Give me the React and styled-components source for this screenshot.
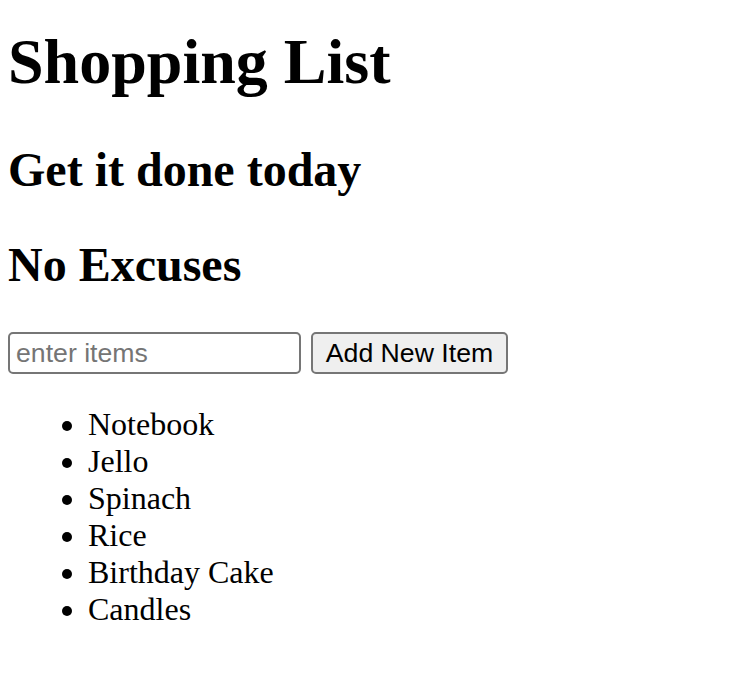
import React, { useState } from "react"
import styled, { createGlobalStyle } from "styled-components"

const GlobalStyle = createGlobalStyle`
  body {
    margin: 0;
    background: #fff;
    color: #000;
    font-family: "Liberation Serif", "Times New Roman", serif;
  }
`

const Page = styled.div`
  padding: 0 8px;
`

const Title = styled.h1`
  margin: 25px 0 43px;
  font-size: 64px;
  font-weight: bold;
  line-height: normal;
`

const Subtitle = styled.h2`
  margin: 40px 0;
  font-size: 48px;
  font-weight: bold;
  line-height: normal;
`

const Form = styled.form`
  display: flex;
  align-items: center;
  gap: 10px;
  margin-top: 39px;
`

const Input = styled.input`
  box-sizing: border-box;
  width: 293px;
  height: 42px;
  padding: 2px 6px;
  border: 2px solid #767676;
  border-radius: 5px;
  font-family: "Liberation Sans", Arial, sans-serif;
  font-size: 26.67px;
  color: #000;
  outline: none;
  ::placeholder {
    color: #757575;
  }
`

const Button = styled.button`
  box-sizing: border-box;
  width: 197px;
  height: 42px;
  padding: 0;
  border: 2px solid #767676;
  border-radius: 5px;
  background: #efefef;
  font-family: "Liberation Sans", Arial, sans-serif;
  font-size: 26.67px;
  color: #000;
  cursor: pointer;
`

const List = styled.ul`
  margin: 32px 0;
  padding-left: 80px;
  font-size: 32px;
  line-height: normal;
  list-style: disc;
`

const Item = styled.li``

const initialItems = ["Notebook", "Jello", "Spinach", "Rice", "Birthday Cake", "Candles"]

const App = () => {
  const [items, setItems] = useState(initialItems)
  const [text, setText] = useState("")

  const addItem = e => {
    e.preventDefault()
    if (!text.trim()) return
    setItems([...items, text.trim()])
    setText("")
  }

  return (
    <Page>
      <GlobalStyle />
      <Title>Shopping List</Title>
      <Subtitle>Get it done today</Subtitle>
      <Subtitle>No Excuses</Subtitle>
      <Form onSubmit={addItem}>
        <Input
          placeholder="enter items"
          value={text}
          onChange={e => setText(e.target.value)}
        />
        <Button type="submit">Add New Item</Button>
      </Form>
      <List>
        {items.map((item, i) => (
          <Item key={i}>{item}</Item>
        ))}
      </List>
    </Page>
  )
}

export default App
